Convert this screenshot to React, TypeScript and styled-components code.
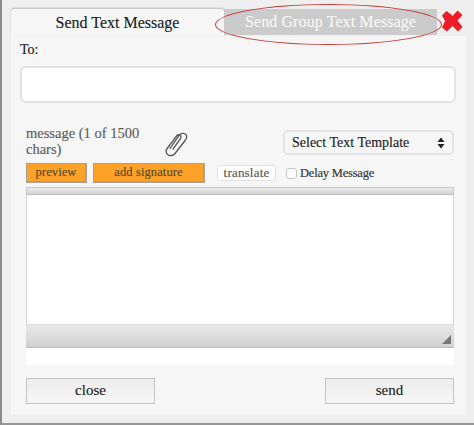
import React from "react";
import styled, { createGlobalStyle } from "styled-components";

const Global = createGlobalStyle`
  html, body { margin: 0; padding: 0; background: #efefef; }
  body { font-family: "Liberation Serif", "DejaVu Serif", serif; color: #222; -webkit-text-stroke: 0.15px; }
  * { box-sizing: border-box; }
`;

const Frame = styled.div`
  position: relative;
  width: 474px;
  height: 425px;
  padding: 9px 8px 0 9px;
  background: #efefef;
  border-left: 2px solid #8c8c8c;
  border-bottom: 2px solid #969696;
  overflow: hidden;
`;

const Tabs = styled.div`
  display: flex;
  height: 27px;
`;

const Tab = styled.div<{ $active?: boolean }>`
  width: 213px;
  height: ${(p) => (p.$active ? "27px" : "26px")};
  display: flex;
  align-items: center;
  justify-content: center;
  font-size: 16px;
  letter-spacing: ${(p) => (p.$active ? "0" : "0.1px")};
  color: ${(p) => (p.$active ? "#1c1c1c" : "#f7f7f7")};
  background: ${(p) => (p.$active ? "#f6f6f6" : "#cbcbcb")};
  border-radius: ${(p) => (p.$active ? "3px 3px 0 0" : "0")};
  box-shadow: ${(p) => (p.$active ? "0 -1px 2px #bbb" : "none")};
`;

const Ellipse = styled.div`
  position: absolute;
  left: 213px;
  top: 4px;
  width: 227px;
  height: 41px;
  border: 1.5px solid #c43a35;
  border-radius: 50%;
`;

const CloseIcon = styled.svg`
  position: absolute;
  left: 439px;
  top: 10px;
  width: 22px;
  height: 22px;
`;

const Panel = styled.div`
  width: 455px;
  height: 379px;
  padding: 5px 10px 0 9px;
  background: #f6f6f6;
  display: flex;
  flex-direction: column;
`;

const ToLabel = styled.label`
  font-size: 14px;
  line-height: 18px;
  color: #222;
`;

const ToInput = styled.div`
  width: 436px;
  height: 37px;
  margin-top: 7px;
  background: #fff;
  border: 2px solid #e2e2e2;
  border-radius: 6px;
`;

const Inner = styled.div`
  padding: 0 0 0 6px;
  display: flex;
  flex-direction: column;
`;

const MessageRow = styled.div`
  display: flex;
  align-items: flex-start;
  margin-top: 22px;
  height: 38px;
`;

const MessageLabel = styled.div`
  width: 130px;
  font-size: 14.5px;
  line-height: 16px;
  color: #5c5c5c;
`;

const Clip = styled.svg`
  width: 24px;
  height: 26px;
  margin-left: 8px;
  margin-top: 6px;
`;

const SelectBox = styled.div`
  margin-left: 95px;
  margin-top: 5px;
  width: 171px;
  height: 25px;
  padding: 0 7px;
  display: flex;
  align-items: center;
  justify-content: space-between;
  font-size: 14px;
  color: #222;
  background: #f6f6f6;
  border: 2px solid #e4e4e4;
  border-radius: 5px;
`;

const Tools = styled.div`
  display: flex;
  align-items: center;
  height: 20px;
`;

const OrangeButton = styled.div<{ $w: number; $ml: number }>`
  width: ${(p) => p.$w}px;
  margin-left: ${(p) => p.$ml}px;
  height: 20px;
  display: flex;
  align-items: center;
  justify-content: center;
  font-size: 12.5px;
  letter-spacing: 0.1px;
  color: #5a4a2a;
  background: #fda127;
  border: 1px solid #a9a196;
  border-right-width: 2px;
  border-bottom-width: 2px;
`;

const Translate = styled.div`
  width: 59px;
  height: 16px;
  margin-left: 12px;
  display: flex;
  align-items: center;
  justify-content: center;
  font-size: 13px;
  letter-spacing: 0.2px;
  color: #555;
  background: #fff;
  border: 1px solid #e2e2e2;
  border-radius: 3px;
`;

const Check = styled.div`
  width: 11px;
  height: 11px;
  margin-left: 10px;
  background: #fff;
  border: 1px solid #c4c4c4;
  border-radius: 3px;
`;

const DelayLabel = styled.span`
  margin-left: 3px;
  font-size: 12.5px;
  letter-spacing: -0.2px;
  color: #333;
`;

const Editor = styled.div`
  width: 428px;
  margin-top: 4px;
  display: flex;
  flex-direction: column;
  background: #fff;
`;

const TopBar = styled.div`
  height: 8px;
  background: linear-gradient(#ececec, #d2d2d2);
  border: 1px solid #c8c8c8;
  border-bottom-color: #bdbdbd;
`;

const EditArea = styled.div`
  height: 129px;
  background: #fff;
  border-left: 1px solid #d4d4d4;
  border-right: 1px solid #d4d4d4;
`;

const BottomBar = styled.div`
  position: relative;
  height: 24px;
  background: linear-gradient(#e9e9e9, #d0d0d0);
  border-top: 1px solid #dcdcdc;
  border-bottom: 1px solid #bdbdbd;
`;

const Grip = styled.svg`
  position: absolute;
  right: 3px;
  bottom: 3px;
  width: 9px;
  height: 9px;
`;

const WhiteStrip = styled.div`
  height: 17px;
  background: #fff;
`;

const Footer = styled.div`
  width: 428px;
  margin-top: 13px;
  display: flex;
  justify-content: space-between;
`;

const FooterButton = styled.div`
  width: 129px;
  height: 26px;
  padding-bottom: 2px;
  display: flex;
  align-items: center;
  justify-content: center;
  font-size: 15px;
  color: #222;
  background: linear-gradient(#ededed, #f6f6f6);
  border: 1px solid #c4c4c4;
`;

export default function App() {
  return (
    <Frame>
      <Global />
      <Tabs>
        <Tab $active>Send Text Message</Tab>
        <Tab>Send Group Text Message</Tab>
      </Tabs>
      <Ellipse />
      <CloseIcon viewBox="0 0 22 22">
        <path d="M4 11 L3.5 10 L1 5.5 L5.5 1 L10 4.5 L11.5 6 L16.5 0.5 L21.5 5 L16.5 10.5 L21.5 17 L17 21.5 L11.5 16 L6 21.5 L1 17.5 Z" fill="#ee1c25" />
      </CloseIcon>
      <Panel>
        <ToLabel>To:</ToLabel>
        <ToInput />
        <Inner>
          <MessageRow>
            <MessageLabel>message (1 of 1500 chars)</MessageLabel>
            <Clip viewBox="0 0 24 26" fill="none" stroke="#555" strokeWidth="1.3" strokeLinecap="round">
              <path d="M6 17.5 L15.5 4 C17.5 1.5 21.5 2 22.5 4.5 C23 6 22.5 7.5 21.5 9 L11 22.5 C9.5 24.5 6 25.5 3.5 23.5 C1.5 21.5 2 19 3.5 17 L13 4.5 C14.5 3 17 4 17 6 C17 7 16.5 7.7 16 8.5 L9 18" />
            </Clip>
            <SelectBox>
              <span>Select Text Template</span>
              <svg width="8" height="12" viewBox="0 0 8 12">
                <path d="M4 0.5 L7.5 5 H0.5 Z M4 11.5 L7.5 7 H0.5 Z" fill="#222" />
              </svg>
            </SelectBox>
          </MessageRow>
          <Tools>
            <OrangeButton $w={61} $ml={0}>preview</OrangeButton>
            <OrangeButton $w={112} $ml={6}>add signature</OrangeButton>
            <Translate>translate</Translate>
            <Check />
            <DelayLabel>Delay Message</DelayLabel>
          </Tools>
          <Editor>
            <TopBar />
            <EditArea />
            <BottomBar>
              <Grip viewBox="0 0 9 9"><path d="M9 0 V9 H0 Z" fill="#777" /></Grip>
            </BottomBar>
            <WhiteStrip />
          </Editor>
          <Footer>
            <FooterButton>close</FooterButton>
            <FooterButton>send</FooterButton>
          </Footer>
        </Inner>
      </Panel>
    </Frame>
  );
}
